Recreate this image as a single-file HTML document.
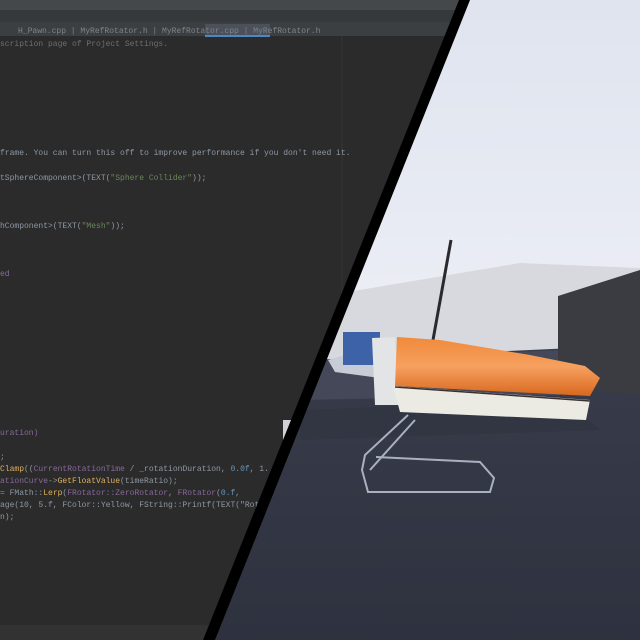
<!DOCTYPE html>
<html><head><meta charset="utf-8"><style>
html,body{margin:0;padding:0;background:#2b2b2b}
svg{display:block}
.c{font-family:"Liberation Mono",monospace;font-size:8px;fill:#8e98a3}
</style></head><body>
<svg width="640" height="640" viewBox="0 0 640 640" xmlns="http://www.w3.org/2000/svg">
<defs>
<linearGradient id="sky" x1="0" y1="0" x2="0" y2="1">
<stop offset="0" stop-color="#dfe4ef"/><stop offset="0.6" stop-color="#eef0f6"/><stop offset="1" stop-color="#f1f2f5"/></linearGradient>
<linearGradient id="fl" x1="0" y1="0" x2="0" y2="1">
<stop offset="0" stop-color="#393d4b"/><stop offset="1" stop-color="#2e323f"/></linearGradient>
<linearGradient id="or" x1="0" y1="0" x2="0" y2="1">
<stop offset="0" stop-color="#f08a3a"/><stop offset="0.5" stop-color="#f6a060"/><stop offset="1" stop-color="#d8681e"/></linearGradient>
</defs>
<rect width="640" height="640" fill="#2b2b2b"/>
<rect width="640" height="10" fill="#45484b"/>
<rect y="10" width="640" height="12" fill="#36393b"/>
<rect y="22" width="640" height="14" fill="#3c3f41"/>
<rect x="205" y="24" width="65" height="12" fill="#4b5059"/>
<rect x="205" y="35" width="65" height="2" fill="#4a88c7"/>
<text x="18" y="33" class="c" font-size="5.5" style="fill:#7d858d">H_Pawn.cpp  |  MyRefRotator.h  |  MyRefRotator.cpp  |  MyRefRotator.h</text>
<line x1="342" y1="36" x2="342" y2="640" stroke="#353535"/>
<rect y="625" width="640" height="15" fill="#323232"/>
<text x="0" y="46" class="c" style="fill:#6f6f6f">scription page of Project Settings.</text>
<text x="0" y="155" class="c">frame.  You can turn this off to improve performance if you don't need it.</text>
<text x="0" y="180" class="c">tSphereComponent&gt;(TEXT(<tspan fill="#6a8759">"Sphere Collider"</tspan>));</text>
<text x="0" y="228" class="c">hComponent&gt;(TEXT(<tspan fill="#6a8759">"Mesh"</tspan>));</text>
<text x="0" y="276" class="c" style="fill:#86699a">ed</text>
<text x="0" y="435" class="c" style="fill:#86699a">uration)</text>
<text x="0" y="459" class="c">;</text>
<text x="0" y="471" class="c"><tspan fill="#e0b060">Clamp</tspan>((<tspan fill="#86699a">CurrentRotationTime</tspan> / _rotationDuration, <tspan fill="#6897bb">0.0f</tspan>, 1.</text>
<text x="0" y="483" class="c"><tspan fill="#86699a">ationCurve</tspan>-&gt;<tspan fill="#e0b060">GetFloatValue</tspan>(timeRatio);</text>
<text x="0" y="495" class="c"><tspan fill="#cc7832">=</tspan> FMath::<tspan fill="#e0b060">Lerp</tspan>(<tspan fill="#86699a">FRotator::ZeroRotator</tspan>, <tspan fill="#86699a">FRotator</tspan>(<tspan fill="#6897bb">0.f</tspan>,</text>
<text x="0" y="507" class="c">age(10, 5.f, FColor::Yellow, FString::Printf(TEXT("Rotat</text>
<text x="0" y="519" class="c">n);</text>
<rect x="283" y="420" width="14" height="50" fill="#d0d2d8"/>
<polygon points="466,0 640,0 640,640 209,640" fill="url(#sky)"/>
<clipPath id="cp"><polygon points="466,0 640,0 640,640 209,640"/></clipPath>
<g clip-path="url(#cp)">
<polygon points="300,300 520,263 640,268 640,400 300,400" fill="#d7d9df"/>
<polygon points="200,365 640,345 640,640 200,640" fill="url(#fl)"/>
<polygon points="300,362 560,350 560,400 300,410" fill="#444858"/>
<polygon points="558,296 640,270 640,395 558,388" fill="#3b3c42"/>
<polygon points="300,400 560,395 600,430 300,440" fill="#303442" opacity="0.7"/>
<line x1="451" y1="240" x2="433" y2="340" stroke="#2a2a2e" stroke-width="3"/>
<polygon points="328,360 345,355 380,355 380,378 335,372" fill="#c7ccd6"/>
<rect x="343" y="332" width="37" height="33" fill="#3d62a8"/>
<polygon points="372,338 395,337 400,405 375,405" fill="#e3e4e6"/>
<polygon points="397,337 440,340 530,355 585,366 600,378 590,396 395,386" fill="url(#or)"/>
<polygon points="393,386 590,400 586,420 400,412" fill="#ecebe3"/>
<line x1="395" y1="387" x2="590" y2="401" stroke="#3a3030" stroke-width="1.5"/>
<path d="M408,415 L365,455 L362,470 L368,492 L490,492 L494,478 L480,462 L376,457 M415,420 L370,470" stroke="#a9b0c0" stroke-width="2" fill="none"/>
</g>
<polygon points="459,0 470,0 215,640 203,640" fill="#000"/>
</svg>
</body></html>
